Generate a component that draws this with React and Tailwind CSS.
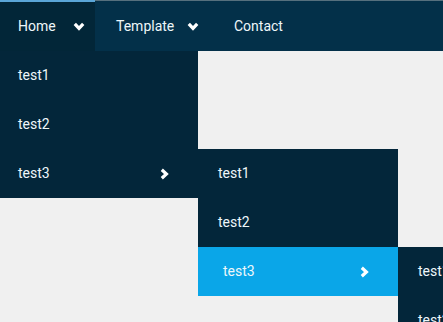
import React from 'react';

const ChevronDown = ({ className = 'ml-[17px]' }) => (
  <svg width="12" height="9" viewBox="0 0 12 9" className={`shrink-0 ${className}`}>
    <polyline points="1.8,1.8 6,6.4 10.2,1.8" fill="none" stroke="white" strokeWidth="3.2" />
  </svg>
);

const ChevronRight = () => (
  <svg width="9" height="12" viewBox="0 0 9 12" className="shrink-0">
    <polyline points="1.8,1.8 6.4,6 1.8,10.2" fill="none" stroke="white" strokeWidth="3.2" />
  </svg>
);

const Item = ({ children, className = '' }) => (
  <div className={`h-[49px] flex items-center text-[14px] text-[#eef7fa] ${className}`}>{children}</div>
);

export default function App() {
  return (
    <div className="w-[443px] h-[322px] bg-[#f0f0f0] overflow-hidden relative" style={{ fontFamily: 'Roboto, "Liberation Sans", sans-serif' }}>
      {/* Top nav */}
      <nav className="h-[51px] flex bg-[#033049] border-t border-[#56707e] text-[14px] text-[#eef7fa]">
        <div className="relative w-[95px] shrink-0 -mt-px bg-[#022638] border-t-2 border-[#5aa6d8] flex items-center pl-[18px]">
          Home
          <ChevronDown />
          {/* level 1 dropdown */}
          <div className="absolute top-[49px] left-0 w-[198px] bg-[#03263a]">
            <Item className="pl-[18px]">test1</Item>
            <Item className="pl-[18px]">test2</Item>
            <div className="relative">
              <Item className="pl-[18px] pr-[29px] justify-between">
                <span>test3</span>
                <ChevronRight />
              </Item>
              {/* level 2 */}
              <div className="absolute top-0 left-full w-[200px] bg-[#03263a]">
                <Item className="pl-[20px]">test1</Item>
                <Item className="pl-[20px]">test2</Item>
                <div className="relative">
                  <Item className="pl-[25px] pr-[29px] justify-between bg-[#0aa6e8]">
                    <span>test3</span>
                    <ChevronRight />
                  </Item>
                  {/* level 3 */}
                  <div className="absolute top-0 left-full w-[200px] bg-[#03263a]">
                    <Item className="pl-[20px]">test1</Item>
                    <Item className="pl-[20px]">test2</Item>
                  </div>
                </div>
              </div>
            </div>
          </div>
        </div>
        <div className="w-[102px] shrink-0 flex items-center pl-[21px]">
          Template
          <ChevronDown className="ml-[13px]" />
        </div>
        <div className="flex items-center pl-[37px]">Contact</div>
      </nav>
    </div>
  );
}
